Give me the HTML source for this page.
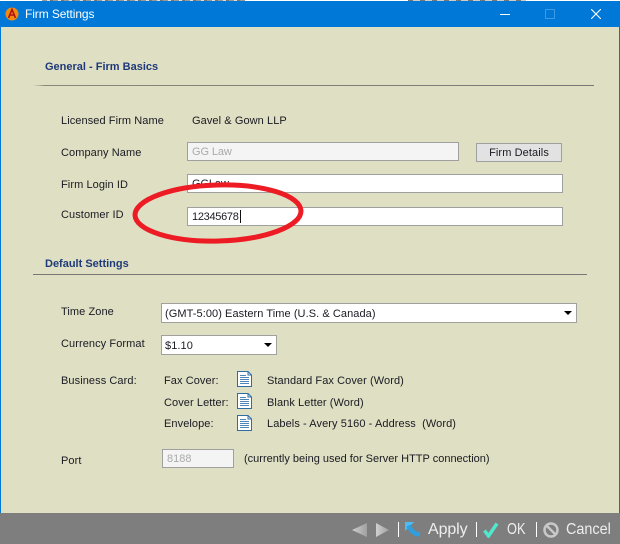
<!DOCTYPE html>
<html><head><meta charset="utf-8"><style>
html,body{margin:0;padding:0}
body{width:620px;height:544px;position:relative;overflow:hidden;background:#fff;font-family:"Liberation Sans",sans-serif;font-size:11px;color:#1a1a22}
div{position:absolute;white-space:nowrap;box-sizing:border-box}
.t{line-height:14px;height:14px;letter-spacing:.08px}
.f{border:1px solid #a0a0a0;background:#fff;line-height:19px;padding-left:4px;height:19px;letter-spacing:-.1px}
.s{padding-left:3px;height:20px;line-height:20px;letter-spacing:.07px}
.d{background:#f4f4f4;color:#aaa}
.h{color:#1f3a7a;font-weight:bold;letter-spacing:0}
.b{top:521px;height:18px;line-height:18px;font-size:16px;color:#eee;transform-origin:left center}
.v{top:522px;width:1px;height:15px;background:#fff}
.r{border:4px solid transparent;border-top:4px solid #000;border-bottom:0}
</style></head><body>
<div style="left:0;top:0;width:620px;height:2px;background:#fff"></div>
<div style="left:42px;top:0;width:203px;height:1px;background:repeating-linear-gradient(90deg,#999 0 5px,#ddd 5px 8px,#777 8px 11px)"></div>
<div style="left:408px;top:0;width:118px;height:1px;background:repeating-linear-gradient(90deg,#777 0 5px,#ccc 5px 12px)"></div>
<div style="left:0;top:1px;width:620px;height:26px;background:#0078d7"></div>
<div style="left:0;top:27px;width:620px;height:486px;background:#dfdfc3;border-left:1px solid #0078d7;border-right:1px solid #0078d7"></div>
<svg style="position:absolute;left:5px;top:7px" width="14" height="14" viewBox="0 0 14 14"><circle cx="7" cy="7" r="6.500" fill="#f08a10"/><path d="M3.500 11L7 2.500 10.500 11M5 8h4" stroke="#b01010" stroke-width="1.600" fill="none"/></svg>
<div class="t" style="left:25px;top:7px;color:#fff;font-size:12px;letter-spacing:-.1px">Firm Settings</div>
<div style="left:500px;top:14px;width:10px;height:1px;background:#fff"></div>
<div style="left:545px;top:9px;width:10px;height:10px;border:1px solid #3f98e2"></div>
<svg style="position:absolute;left:591px;top:9px" width="10" height="10" viewBox="0 0 10 10"><path d="M0 0L10 10M10 0L0 10" stroke="#fff" stroke-width="1.100"/></svg>

<div class="t h" style="left:45px;top:60px">General - Firm Basics</div>
<div style="left:33px;top:85px;width:561px;height:1px;background:linear-gradient(90deg,#dfdfc3,#88887a 12px,#777 100%)"></div>
<div class="t" style="left:61px;top:114px">Licensed Firm Name</div>
<div class="t" style="left:192px;top:114px">Gavel &amp; Gown LLP</div>
<div class="t" style="left:61px;top:146px">Company Name</div>
<div class="f d" style="left:187px;top:142px;width:272px">GG Law</div>
<div style="left:476px;top:143px;width:86px;height:19px;border:1px solid #a0a0a0;background:#e2e2e2;text-align:center;line-height:19px;letter-spacing:.1px">Firm Details</div>
<div class="t" style="left:61px;top:178px">Firm Login ID</div>
<div class="f" style="left:187px;top:174px;width:376px">GGLaw</div>
<div class="t" style="left:61px;top:208px">Customer ID</div>
<div class="f" style="left:187px;top:207px;width:376px;letter-spacing:-.3px">12345678</div>
<div style="left:240px;top:210px;width:1px;height:13px;background:#111"></div>
<svg style="position:absolute;left:128px;top:176px" width="182" height="72"><ellipse cx="90" cy="37" rx="83" ry="28" fill="none" stroke="#ed1c24" stroke-width="5" transform="rotate(-1.500 90 37)"/></svg>

<div class="t h" style="left:45px;top:257px">Default Settings</div>
<div style="left:33px;top:274px;width:554px;height:1px;background:#777"></div>
<div class="t" style="left:61px;top:305px">Time Zone</div>
<div class="f s" style="left:161px;top:303px;width:416px">(GMT-5:00) Eastern Time (U.S. &amp; Canada)</div>
<div class="r" style="left:564px;top:311px"></div>
<div class="t" style="left:61px;top:337px">Currency Format</div>
<div class="f s" style="left:161px;top:335px;width:116px">$1.10</div>
<div class="r" style="left:264px;top:343px"></div>
<div class="t" style="left:61px;top:374px">Business Card:</div>
<div class="t" style="left:164px;top:374px">Fax Cover:</div>
<div class="t" style="left:164px;top:396px">Cover Letter:</div>
<div class="t" style="left:164px;top:417px">Envelope:</div>
<svg style="position:absolute;left:237px;top:371px" width="15" height="16" viewBox="0 0 15 16"><path d="M.5.5H11L14.500 4V15.500H.5Z" fill="#fff" stroke="#2f6ea5"/><path d="M11 .5V4H14.500" fill="none" stroke="#2f6ea5"/><path d="M3 4.500H9M3 6.500H12M3 8.500H12M3 10.500H12M3 12.500H12" fill="none" stroke="#4f86b8"/></svg>
<svg style="position:absolute;left:237px;top:393px" width="15" height="16" viewBox="0 0 15 16"><path d="M.5.5H11L14.500 4V15.500H.5Z" fill="#fff" stroke="#2f6ea5"/><path d="M11 .5V4H14.500" fill="none" stroke="#2f6ea5"/><path d="M3 4.500H9M3 6.500H12M3 8.500H12M3 10.500H12M3 12.500H12" fill="none" stroke="#4f86b8"/></svg>
<svg style="position:absolute;left:237px;top:415px" width="15" height="16" viewBox="0 0 15 16"><path d="M.5.5H11L14.500 4V15.500H.5Z" fill="#fff" stroke="#2f6ea5"/><path d="M11 .5V4H14.500" fill="none" stroke="#2f6ea5"/><path d="M3 4.500H9M3 6.500H12M3 8.500H12M3 10.500H12M3 12.500H12" fill="none" stroke="#4f86b8"/></svg>
<div class="t" style="left:267px;top:374px">Standard Fax Cover (Word)</div>
<div class="t" style="left:267px;top:396px">Blank Letter (Word)</div>
<div class="t" style="left:267px;top:417px">Labels - Avery 5160 - Address&nbsp; (Word)</div>
<div class="t" style="left:61px;top:454px">Port</div>
<div class="f d" style="left:162px;top:449px;width:72px;letter-spacing:0">8188</div>
<div class="t" style="left:244px;top:452px;letter-spacing:0">(currently being used for Server HTTP connection)</div>

<div style="left:0;top:513px;width:620px;height:31px;background:#7e7e7e"></div>
<svg style="position:absolute;left:350px;top:521px" width="42" height="18"><defs><linearGradient id="g1"><stop offset="0" stop-color="#d0d0d0"/><stop offset="1" stop-color="#a0a0a0"/></linearGradient></defs><path d="M2 9L17 2V16Z" fill="url(#g1)"/><path d="M26 2L39 9 26 16Z" fill="url(#g1)"/></svg>
<div class="v" style="left:398px"></div>
<svg style="position:absolute;left:405px;top:522px" width="17" height="16" viewBox="0 0 17 16"><path d="M0 0H9L0 9Z" fill="#4fbdf5"/><path d="M3.500 3.500C6 9 10 12.500 15 12.500" fill="none" stroke="#2f9fe0" stroke-width="4.500"/></svg>
<div class="b" style="left:428px;letter-spacing:-.1px">Apply</div>
<div class="v" style="left:476px"></div>
<svg style="position:absolute;left:483px;top:522px" width="16" height="16" viewBox="0 0 16 16"><path d="M1.500 8.500L5.500 14 14 1.500" fill="none" stroke="#4fe8cc" stroke-width="3.500"/></svg>
<div class="b" style="left:507px;transform:scaleX(.8)">OK</div>
<div class="v" style="left:536px"></div>
<svg style="position:absolute;left:543px;top:522px" width="16" height="16" viewBox="0 0 16 16"><circle cx="8" cy="8" r="6.500" fill="none" stroke="#c8c8c8" stroke-width="2.500"/><path d="M3.500 3.500L12.500 12.500" stroke="#c8c8c8" stroke-width="2.500"/></svg>
<div class="b" style="left:566px;transform:scaleX(.9)">Cancel</div>
</body></html>
